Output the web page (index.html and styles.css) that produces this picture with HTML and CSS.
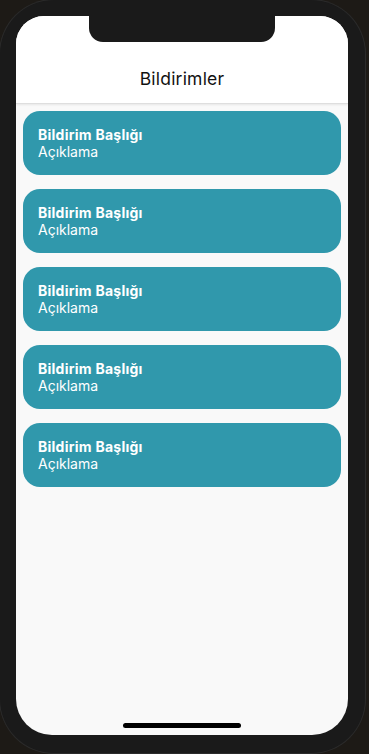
FILE: index.html
```html
<!DOCTYPE html>
<html lang="tr">
<head>
<meta charset="utf-8">
<title>Bildirimler</title>
<link rel="stylesheet" href="styles.css">
</head>
<body>
<div class="phone">
  <div class="screen">
    <div class="notch"></div>
    <header class="header">
      <h1 class="title">Bildirimler</h1>
    </header>
    <main class="list">
      <div class="card"><div class="card-title">Bildirim Başlığı</div><div class="card-desc">Açıklama</div></div>
      <div class="card"><div class="card-title">Bildirim Başlığı</div><div class="card-desc">Açıklama</div></div>
      <div class="card"><div class="card-title">Bildirim Başlığı</div><div class="card-desc">Açıklama</div></div>
      <div class="card"><div class="card-title">Bildirim Başlığı</div><div class="card-desc">Açıklama</div></div>
      <div class="card"><div class="card-title">Bildirim Başlığı</div><div class="card-desc">Açıklama</div></div>
    </main>
    <div class="home-indicator"></div>
  </div>
</div>
</body>
</html>
```
FILE: styles.css
```css
* { box-sizing: border-box; }
html, body { margin: 0; padding: 0; }
body {
  width: 369px;
  height: 754px;
  overflow: hidden;
  background: #1d1a16;
  font-family: Inter, "Noto Sans", "Liberation Sans", sans-serif;
}
.phone {
  width: 365px;
  height: 753px;
  background: #1a1a1a;
  border-radius: 54px;
  padding: 16px 17px 18px 16px;
  box-shadow: 0 0 0 1px #2b2b2b;
}
.screen {
  position: relative;
  width: 332px;
  height: 719px;
  background: #f9f9f9;
  border-radius: 28px 28px 36px 36px;
  overflow: hidden;
  display: flex;
  flex-direction: column;
}
.notch {
  position: absolute;
  top: 0;
  left: 73px;
  width: 186px;
  height: 26px;
  background: #1a1a1a;
  border-radius: 0 0 14px 14px;
}
.header {
  height: 88px;
  background: #ffffff;
  display: flex;
  align-items: flex-end;
  justify-content: center;
  padding-bottom: 14px;
  border-bottom: 1px solid #dedede;
  box-shadow: 0 1px 2px rgba(0,0,0,0.08);
}
.title {
  margin: 0;
  font-size: 17.5px;
  line-height: 20px;
  font-weight: 400;
  letter-spacing: 0.2px;
  color: #111;
}
.list {
  display: flex;
  flex-direction: column;
  gap: 14px;
  padding: 7px 7px 0 7px;
}
.card {
  height: 64px;
  background: #3098ac;
  border-radius: 17px;
  padding: 0 15px;
  display: flex;
  flex-direction: column;
  justify-content: center;
  color: #ffffff;
  font-size: 14px;
  line-height: 17px;
}
.card-title { font-weight: 700; letter-spacing: 0.25px; }
.card-desc { font-weight: 400; }
.home-indicator {
  position: absolute;
  left: 107px;
  bottom: 7px;
  width: 118px;
  height: 5px;
  border-radius: 3px;
  background: #000;
}
```
